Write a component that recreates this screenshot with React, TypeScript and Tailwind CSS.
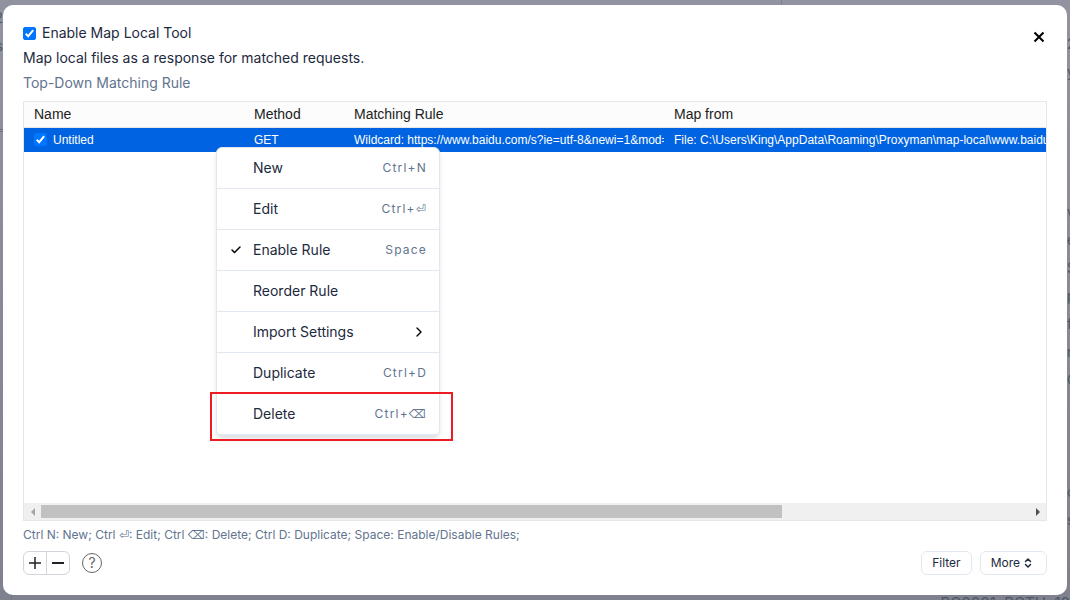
import { Check, ChevronRight, ChevronsUpDown } from "lucide-react";

const menuItems = [
  { label: "New", shortcut: "Ctrl+N" },
  { label: "Edit", shortcut: "Ctrl+", symbol: "⏎" },
  { label: "Enable Rule", shortcut: "Space", checked: true },
  { label: "Reorder Rule" },
  { label: "Import Settings", submenu: true },
  { label: "Duplicate", shortcut: "Ctrl+D" },
  { label: "Delete", shortcut: "Ctrl+", symbol: "⌫" },
];

const rules = [
  {
    name: "Untitled",
    method: "GET",
    matching: "Wildcard: https://www.baidu.com/s?ie=utf-8&newi=1&mod=1",
    from: "File: C:\\Users\\King\\AppData\\Roaming\\Proxyman\\map-local\\www.baidu.com",
  },
];

// Right-hand text of the dimmed window, one entry per 28px row
const backdropRows = [
  "2", "y", "", "", "", "", "w", "e", "S", "p", "f", "r", "C", "", "", "", "c", "s", "", "",
];

function Backdrop() {
  return (
    <div
      aria-hidden="true"
      className="absolute inset-0 overflow-hidden bg-linear-to-b from-[#9194a0] to-[#7f828e] text-sm text-[#4f5766]"
    >
      <div className="absolute top-0 left-[781px] h-[5px] w-px bg-[#7c808c]" />
      <div className="absolute bottom-0 left-[11px] h-[5px] w-px bg-[#737783]" />
      <div className="absolute top-[129px] left-0 h-[3px] w-[3px] border-y border-[#6f7480]" />
      <div className="absolute top-1 left-0 flex w-[3px] flex-col items-end">
        <span className="h-7 leading-7">2</span>
        <span className="h-7 leading-7">s</span>
      </div>
      <div className="absolute top-[30px] right-0 flex w-[3px] flex-col">
        {backdropRows.map((text, i) => (
          <span key={i} className="h-7 leading-7">
            {text}
          </span>
        ))}
      </div>
      <span className="absolute right-0 -bottom-2.5 text-[15px] leading-none">BC0001, BCTH, 10</span>
    </div>
  );
}

function Checkbox({ id, label }: { id: string; label?: string }) {
  return (
    <span className="relative inline-flex size-[13px] shrink-0">
      <input
        id={id}
        type="checkbox"
        defaultChecked
        aria-label={label}
        className="peer size-[13px] appearance-none rounded-[2px] border border-gray-500 bg-white checked:border-[#0075ff] checked:bg-[#0075ff]"
      />
      <svg
        viewBox="0 0 13 13"
        className="pointer-events-none absolute inset-0 hidden size-[13px] peer-checked:block"
        fill="none"
        stroke="white"
        strokeWidth="2"
      >
        <path d="M2.8 6.8 5.2 9.2 10.2 3.2" />
      </svg>
    </span>
  );
}

// Key symbols look better outside of Inter
function KeySymbol({ children }: { children: string }) {
  return <span className="font-['Liberation_Sans','DejaVu_Sans',sans-serif]">{children}</span>;
}

function ContextMenu() {
  return (
    <div
      role="menu"
      className="absolute top-[45px] left-[192px] w-[224px] divide-y divide-slate-200 rounded-md border border-slate-200 bg-white font-[Inter,sans-serif] shadow-md"
    >
      {menuItems.map((item) => (
        <button
          key={item.label}
          role="menuitem"
          className="flex h-[41px] w-full items-center pr-3 text-sm text-slate-800 last:h-10"
        >
          <span className="flex w-9 justify-center pl-0.5">
            {item.checked && <Check className="size-3 text-black" strokeWidth={3} />}
          </span>
          {item.label}
          {item.shortcut && (
            <span className="ml-auto text-xs tracking-widest text-slate-500">
              {item.shortcut}
              {item.symbol && <KeySymbol>{item.symbol}</KeySymbol>}
            </span>
          )}
          {item.submenu && <ChevronRight className="ml-auto size-4 text-black" />}
        </button>
      ))}
      {/* Highlight around the last item */}
      <div className="pointer-events-none absolute -right-3.5 -bottom-1.5 -left-[7px] h-[49px] border-2 border-[#ed1c24]" />
    </div>
  );
}

function RuleTable() {
  return (
    <div className="relative flex flex-1 flex-col border border-gray-200 font-['Liberation_Sans',Arial,sans-serif]">
      <div className="flex-1 overflow-hidden">
        <table className="w-full table-fixed border-collapse text-left">
          <colgroup>
            <col className="w-[220px]" />
            <col className="w-[100px]" />
            <col className="w-[320px]" />
            <col />
          </colgroup>
          <thead>
            <tr className="h-[25px] border-b border-gray-200 bg-[#fcfcfc] text-sm text-[#222]">
              <th className="pl-2.5 font-normal">Name</th>
              <th className="pl-2.5 font-normal">Method</th>
              <th className="pl-2.5 font-normal">Matching Rule</th>
              <th className="pl-2.5 font-normal">Map from</th>
            </tr>
          </thead>
          <tbody>
            {rules.map((rule) => (
              <tr key={rule.name} className="h-[25px] bg-[#0063e1] text-xs text-white">
                <td className="pl-2.5">
                  <div className="flex items-center gap-1.5">
                    <Checkbox id="rule-untitled" label="Enable Untitled" />
                    {rule.name}
                  </div>
                </td>
                <td className="pl-2.5">{rule.method}</td>
                <td className="pl-2.5">
                  <div className="overflow-hidden whitespace-nowrap">{rule.matching}</div>
                </td>
                <td className="pl-2.5">
                  <div className="overflow-hidden whitespace-nowrap">{rule.from}</div>
                </td>
              </tr>
            ))}
          </tbody>
        </table>
      </div>

      {/* Horizontal scrollbar */}
      <div className="flex h-[17px] items-center bg-[#f0f0f0]">
        <span className="flex w-[17px] justify-center">
          <svg viewBox="0 0 4 8" className="h-2 w-1" fill="#a3a3a3">
            <path d="M4 0v8L0 4z" />
          </svg>
        </span>
        <div className="flex-1">
          <div className="h-[13px] w-3/4 bg-[#c1c1c1]" />
        </div>
        <span className="flex w-[17px] justify-center">
          <svg viewBox="0 0 4 8" className="h-2 w-1" fill="#505050">
            <path d="M0 0v8l4-4z" />
          </svg>
        </span>
      </div>

      <ContextMenu />
    </div>
  );
}

export default function App() {
  return (
    <div className="relative flex min-h-screen flex-col px-[3px] py-[5px] font-[Inter,sans-serif] text-sm text-slate-800">
      <Backdrop />
      <div role="dialog" className="relative flex flex-1 flex-col rounded-[10px] bg-white px-5 pt-[18px] pb-5">
        <div className="flex justify-between">
          <div>
            <div className="flex h-5 items-center gap-1.5">
              <Checkbox id="enable-tool" />
              <label htmlFor="enable-tool">Enable Map Local Tool</label>
            </div>
            <p className="mt-[5px]">Map local files as a response for matched requests.</p>
            <p className="mt-[5px] text-slate-500">Top-Down Matching Rule</p>
          </div>
          <button aria-label="Close" className="flex h-7 w-[18px] items-start pt-1 text-black">
            <svg viewBox="0 0 20 20" className="size-5 shrink-0" fill="none" stroke="currentColor" strokeWidth="2">
              <path d="m5.5 5.5 9 9m0-9-9 9" />
            </svg>
          </button>
        </div>

        <div className="mt-2 flex flex-1 flex-col">
          <RuleTable />
        </div>

        <p className="mt-1.5 text-xs text-slate-500">
          Ctrl N: New; Ctrl <KeySymbol>⏎</KeySymbol>: Edit; Ctrl <KeySymbol>⌫</KeySymbol>: Delete; Ctrl D: Duplicate;
          Space: Enable/Disable Rules;
        </p>

        <div className="mt-2 flex h-6 items-center">
          <div className="flex h-6 divide-x divide-gray-300 rounded-md border border-gray-300 text-[#222]">
            <button aria-label="Add rule" className="flex w-[23px] items-center justify-center">
              <svg viewBox="0 0 14 14" className="size-3.5" stroke="currentColor" strokeWidth="1.5">
                <path d="M7 1v12M1 7h12" />
              </svg>
            </button>
            <button aria-label="Remove rule" className="flex w-[22px] items-center justify-center">
              <svg viewBox="0 0 14 14" className="size-3.5" stroke="currentColor" strokeWidth="2">
                <path d="M1 7h12" />
              </svg>
            </button>
          </div>
          <button
            aria-label="Help"
            className="ml-3 flex size-5 items-center justify-center rounded-full border border-[#666] text-sm text-[#666]"
          >
            ?
          </button>
          <button className="ml-auto h-6 rounded-md border border-slate-200 px-2.5 text-xs">Filter</button>
          <button className="ml-2 flex h-6 items-center gap-0.5 rounded-md border border-slate-200 pr-3 pl-2.5 text-xs">
            More
            <ChevronsUpDown className="size-3" strokeWidth={3} />
          </button>
        </div>
      </div>
    </div>
  );
}
